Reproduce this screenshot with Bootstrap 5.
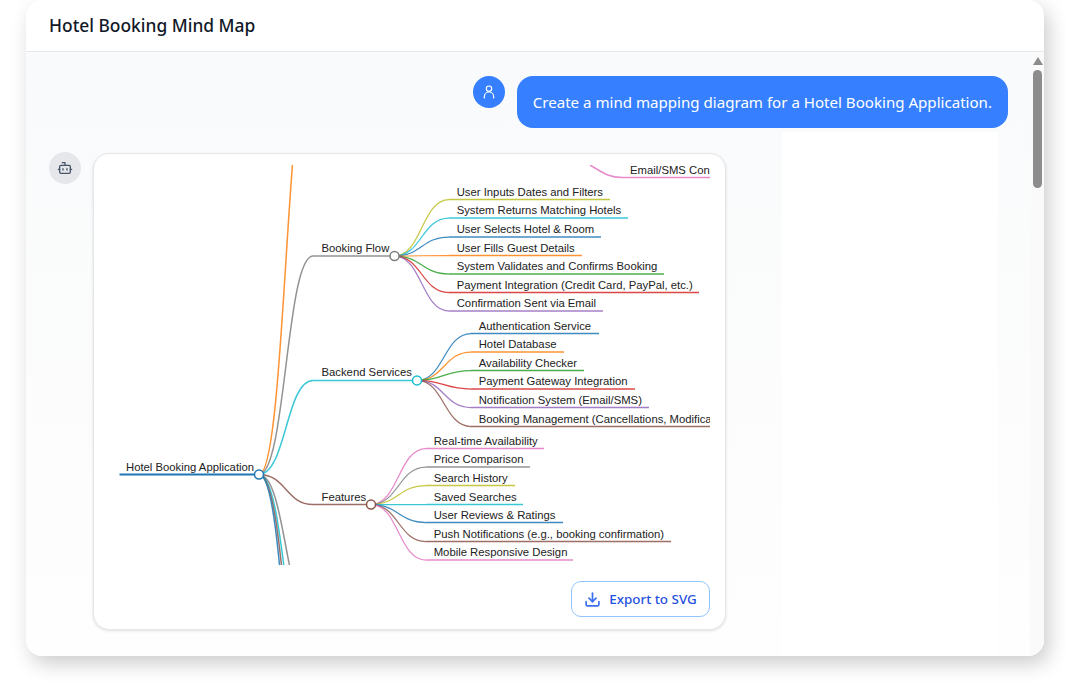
<!DOCTYPE html>
<html lang="en">
<head>
    <meta charset="UTF-8">
    <meta name="viewport" content="width=device-width, initial-scale=1.0">
    <title>Hotel Booking Mind Map</title>
    <link href="https://cdn.jsdelivr.net/npm/bootstrap@5.3.0/dist/css/bootstrap.min.css" rel="stylesheet">
    <style>
        body {
            background-color: #fff;
            font-family: "Noto Sans", sans-serif;
            min-height: 685px;
        }
        .chat-window {
            width: 1018px;
            height: 656px;
            margin-left: 26px;
            background-color: #fff;
            border-radius: 16px;
            box-shadow: 5px 8px 20px rgba(0, 0, 0, .2);
            overflow: hidden;
        }
        .chat-head {
            height: 52px;
            padding: 0 23px;
            border-bottom: 1px solid #e5e7eb;
        }
        .chat-head h1 {
            font-size: 17.4px;
            font-weight: 500;
            color: #111827;
            margin: 0;
        }
        .chat-body {
            background: linear-gradient(#f9fafb, #fefefe);
            min-height: 0;
        }
        .chat-scroll {
            padding: 24px 22px 0 23px;
        }
        .avatar {
            width: 32px;
            height: 32px;
            flex: none;
        }
        .avatar-user { background-color: #3680ff; color: #fff; }
        .avatar-bot { background-color: #e5e7eb; color: #475569; }
        .user-bubble {
            height: 52px;
            padding: 0 16px;
            background-color: #3680ff;
            color: #fff;
            font-size: 15.1px;
            border-radius: 16px;
        }
        .map-card {
            width: 633px;
            height: 477px;
            flex: none;
            margin-top: 1px;
            border: 1px solid #e5e7eb;
            border-radius: 16px;
            background-color: #fff;
            box-shadow: 0 1px 3px rgba(0, 0, 0, .12);
            padding: 11px 15px 12px 16px;
        }
        .map-card svg text {
            font-family: "Liberation Sans", sans-serif;
            font-size: 11.3px;
            fill: #222;
        }
        .side-panel {
            width: 216px;
            margin: -20px 10px 0 auto;
            background-color: #fff;
        }
        .export-btn {
            height: 36px;
            width: 139px;
            border: 1px solid #93c5fd;
            border-radius: 10px;
            background-color: #fff;
            color: #1f50e0;
            font-size: 13.4px;
            font-weight: 500;
        }
        .fake-scrollbar {
            width: 14px;
            flex: none;
            padding-top: 5px;
            background-color: #fafafa;
        }
        .fake-scrollbar .arrow {
            width: 0;
            height: 0;
            border-left: 5px solid transparent;
            border-right: 5px solid transparent;
            border-bottom: 8px solid #8c8c8c;
            margin: 0 auto 5px 3px;
        }
        .fake-scrollbar .thumb {
            width: 9px;
            height: 118px;
            margin-left: 3px;
            border-radius: 5px;
            background-color: #8c8c8c;
        }
    </style>
</head>
<body>

<div class="chat-window d-flex flex-column">
    <div class="chat-head d-flex align-items-center">
        <h1>Hotel Booking Mind Map</h1>
    </div>
    <div class="chat-body d-flex flex-grow-1">
        <div class="chat-scroll flex-grow-1 d-flex flex-column">
            <div class="d-flex justify-content-end align-items-start gap-2 mb-4">
                <div class="avatar avatar-user rounded-circle d-flex align-items-center justify-content-center me-1">
                    <svg width="16" height="16" viewBox="0 0 24 24" fill="none" stroke="currentColor" stroke-width="1.8" stroke-linecap="round" stroke-linejoin="round"><circle cx="12" cy="7" r="4"/><path d="M5 21v-2a7 7 0 0 1 14 0v2"/></svg>
                </div>
                <div class="user-bubble d-flex align-items-center">Create a mind mapping diagram for a Hotel Booking Application.</div>
            </div>
            <div class="d-flex align-items-start gap-2 flex-grow-1">
                <div class="avatar avatar-bot rounded-circle d-flex align-items-center justify-content-center me-1">
                    <svg width="16" height="16" viewBox="0 0 24 24" fill="none" stroke="currentColor" stroke-width="2" stroke-linecap="round" stroke-linejoin="round"><path d="M12 8V4H8"/><rect x="4" y="8" width="16" height="12" rx="2"/><path d="M2 14h2M20 14h2M15 13v2M9 13v2"/></svg>
                </div>
                <div class="map-card">
                    <svg id="map" width="600" height="400" viewBox="110 165 600 400" class="d-block"></svg>
                    <div class="d-flex justify-content-end mt-3">
                        <button class="export-btn d-flex align-items-center justify-content-center gap-2" type="button">
                            <svg width="17" height="17" viewBox="0 0 24 24" fill="none" stroke="#3b6ff0" stroke-width="2.4" stroke-linecap="round" stroke-linejoin="round"><path d="M3 15v4a2 2 0 0 0 2 2h14a2 2 0 0 0 2-2v-4"/><path d="M7 10l5 5 5-5"/><path d="M12 15V3"/></svg>
                            Export to SVG
                        </button>
                    </div>
                </div>
                <div class="side-panel align-self-stretch"></div>
            </div>
        </div>
        <div class="fake-scrollbar">
            <div class="arrow"></div>
            <div class="thumb"></div>
        </div>
    </div>
</div>

<script>
    const BLUE = "#1f77b4", ORANGE = "#ff7f0e", GREEN = "#2ca02c", RED = "#d62728", PURPLE = "#9467bd",
          BROWN = "#8c564b", PINK = "#e377c2", GRAY = "#7f7f7f", OLIVE = "#bcbd22", CYAN = "#17becf";

    // branches with the y of each leaf line and where that line stops
    const branches = [
        { label: "Booking Flow", color: GRAY, y: 256, end: 394.5, leafX: 449, leaves: [
            ["User Inputs Dates and Filters", 199.5, 610, OLIVE],
            ["System Returns Matching Hotels", 218, 628, CYAN],
            ["User Selects Hotel & Room", 237, 601, BLUE],
            ["User Fills Guest Details", 255.5, 582, ORANGE],
            ["System Validates and Confirms Booking", 274, 664, GREEN],
            ["Payment Integration (Credit Card, PayPal, etc.)", 292.5, 699, RED],
            ["Confirmation Sent via Email", 311, 603, PURPLE]
        ]},
        { label: "Backend Services", color: CYAN, y: 380.4, end: 417, leafX: 471, leaves: [
            ["Authentication Service", 333.5, 599, BLUE],
            ["Hotel Database", 352, 564, ORANGE],
            ["Availability Checker", 370.5, 584, GREEN],
            ["Payment Gateway Integration", 389, 635, RED],
            ["Notification System (Email/SMS)", 407.5, 649, PURPLE],
            ["Booking Management (Cancellations, Modifica", 426.5, 710, BROWN]
        ]},
        { label: "Features", color: BROWN, y: 504.5, end: 371, leafX: 426, leaves: [
            ["Real-time Availability", 448.5, 544, PINK],
            ["Price Comparison", 467, 530, GRAY],
            ["Search History", 485.5, 515, OLIVE],
            ["Saved Searches", 504.5, 523, CYAN],
            ["User Reviews & Ratings", 522.5, 563, BLUE],
            ["Push Notifications (e.g., booking confirmation)", 541.5, 671, BROWN],
            ["Mobile Responsive Design", 560, 573, PINK]
        ]}
    ];

    const rootX = 259, rootY = 474.5, branchX = 313;
    let lines = "", dots = "", labels = "";

    function link(x1, y1, x2, y2, color, width) {
        let mid = (x1 + x2) / 2;
        return `<path d="M${x1} ${y1} C${mid} ${y1} ${mid} ${y2} ${x2} ${y2}" fill="none" stroke="${color}" stroke-width="${width}" stroke-opacity=".85"/>`;
    }
    function dot(x, y, color) {
        return `<circle cx="${x}" cy="${y}" r="4.5" fill="#fff" stroke="${color}" stroke-width="1.5"/>`;
    }
    function label(text, x, y) {
        return `<text x="${x}" y="${y - 4}">${text.replace("&", "&amp;")}</text>`;
    }

    // branches that run off the visible part of the map
    [[45, ORANGE], [620, GRAY], [690, CYAN], [740, BROWN], [800, BLUE]].forEach(([y, color]) => {
        lines += link(rootX, rootY, branchX, y, color, 1.5);
    });

    branches.forEach(b => {
        lines += link(rootX, rootY, branchX, b.y, b.color, 1.5);
        lines += `<path d="M${branchX} ${b.y} H${b.end}" stroke="${b.color}" stroke-width="1.5" stroke-opacity=".85"/>`;
        labels += label(b.label, branchX + 8.5, b.y);
        b.leaves.forEach(([text, y, end, color]) => {
            lines += link(b.end, b.y, b.leafX, y, color, 1.25);
            lines += `<path d="M${b.leafX} ${y} H${end}" stroke="${color}" stroke-width="1.5" stroke-opacity=".85"/>`;
            labels += label(text, b.leafX + 7.7, y);
        });
        dots += dot(b.end, b.y, b.color);
    });

    // tail of the branch above the visible part
    lines += `<path d="M590 165 C602 172 608 177.5 622 177.5 H710" fill="none" stroke="${PINK}" stroke-width="1.5" stroke-opacity=".85"/>`;
    labels += label("Email/SMS Con", 630, 177.5);

    lines += `<path d="M119.5 ${rootY} H${rootX}" stroke="${BLUE}" stroke-width="2.2"/>`;
    labels += label("Hotel Booking Application", 126, rootY);
    dots += dot(rootX, rootY, BLUE);

    document.getElementById("map").innerHTML = lines + dots + labels;
</script>
<script src="https://cdn.jsdelivr.net/npm/bootstrap@5.3.0/dist/js/bootstrap.bundle.min.js"></script>
</body>
</html>
